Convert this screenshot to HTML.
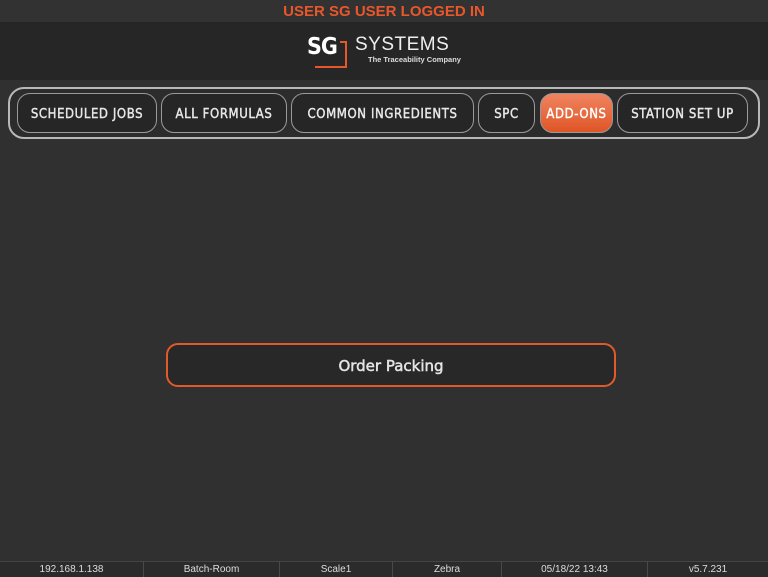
<!DOCTYPE html>
<html><head><style>
*{margin:0;padding:0;box-sizing:border-box}
body{width:768px;height:577px;background:#303030;position:relative;overflow:hidden;font-family:"Liberation Sans",sans-serif}
.top{position:absolute;left:0;top:0;width:768px;height:22px;background:#323232;color:#e8572a;font-weight:bold;font-size:15px;text-align:center;line-height:23px}
.logo{position:absolute;left:0;top:22px;width:768px;height:58px;background:#262626}
.pill{position:absolute;left:8px;top:87px;width:752px;height:52px;border:2px solid #b8b8b8;border-radius:16px;background:#2c2c2c}
.b{position:absolute;top:93px;height:40px;border:1.5px solid #9a9a9a;border-radius:13px;background:#262626;color:#e8e8e8;font-size:13px;letter-spacing:0.6px;text-align:center;line-height:41px;font-family:"DejaVu Sans Condensed","DejaVu Sans",sans-serif;-webkit-text-stroke:0.4px #e8e8e8}
.b.on{background:linear-gradient(#ef8460,#df5526);color:#fff;border-color:#999;-webkit-text-stroke:0.4px #fff}
.op{position:absolute;left:166px;top:343px;width:450px;height:44px;border:2px solid #e25a2a;border-radius:12px;background:#282828;color:#e4e4e4;font-family:"DejaVu Sans",sans-serif;font-size:15px;text-align:center;line-height:43px;-webkit-text-stroke:0.5px #e4e4e4}
.st{position:absolute;left:0;top:561px;width:768px;height:16px;background:#2b2b2b;border-top:1px solid #444;display:flex}
.st div{border-right:1px solid #4a4a4a;color:#ddd;font-size:10px;text-align:center;line-height:15px}
</style></head><body>
<div class="top">USER SG USER LOGGED IN</div>
<div class="logo">
 <div style="position:absolute;left:307px;top:12px;color:#fff;font-weight:bold;font-size:23px;letter-spacing:-1px;font-family:'DejaVu Sans Condensed',sans-serif">SG</div>
 <div style="position:absolute;left:315px;top:44px;width:32px;height:2px;background:#e8572a"></div>
 <div style="position:absolute;left:345px;top:19px;width:2px;height:27px;background:#e8572a"></div>
 <div style="position:absolute;left:340px;top:19px;width:7px;height:2px;background:#e8572a"></div>
 <div style="position:absolute;left:355px;top:12px;color:#eee;font-size:19px;letter-spacing:0.5px">SYSTEMS</div>
 <div style="position:absolute;left:368px;top:33px;color:#ddd;font-size:7.5px;font-weight:bold">The Traceability Company</div>
</div>
<div class="pill"></div>
<div class="b" style="left:17px;width:140px">SCHEDULED JOBS</div>
<div class="b" style="left:161px;width:126px">ALL FORMULAS</div>
<div class="b" style="left:291px;width:183px">COMMON INGREDIENTS</div>
<div class="b" style="left:478px;width:57px">SPC</div>
<div class="b on" style="left:540px;width:73px">ADD-ONS</div>
<div class="b" style="left:617px;width:131px">STATION SET UP</div>
<div class="op">Order Packing</div>
<div class="st">
<div style="width:144px">192.168.1.138</div>
<div style="width:136px">Batch-Room</div>
<div style="width:113px">Scale1</div>
<div style="width:109px">Zebra</div>
<div style="width:146px">05/18/22 13:43</div>
<div style="width:120px;border:none">v5.7.231</div>
</div>
</body></html>
